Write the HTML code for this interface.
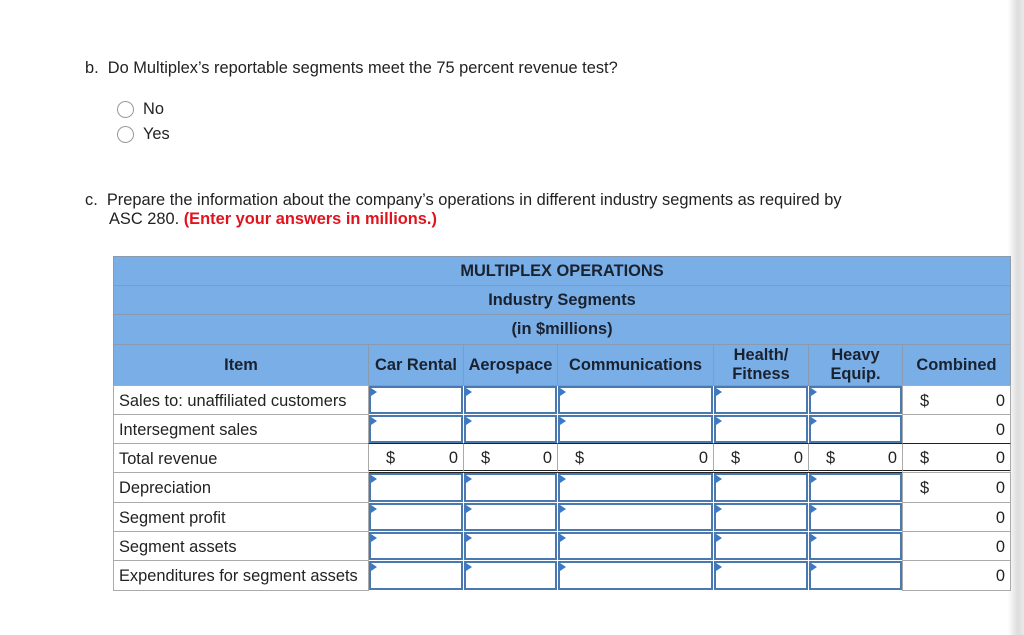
<!DOCTYPE html>
<html><head><meta charset="utf-8"><style>
body{margin:0;width:1024px;height:635px;background:#fff;font-family:"Liberation Sans",Arial,sans-serif;color:#222;position:relative;overflow:hidden}
.a{position:absolute}
.q{font-size:16.4px;color:#222}
.rad{width:15px;height:15px;border:1px solid #999;border-radius:50%;background:#fff}
.c{position:absolute;box-sizing:border-box;font-size:16.4px;display:flex;align-items:center}
.h{background:#7aaee6;font-weight:bold;justify-content:center;text-align:center;border:1px solid #8a9bb0;line-height:19px;color:#1a2230}
.in{border:1px solid #aaa;background:#fff}
.inp{position:absolute;box-sizing:border-box;border:2px solid #4a78b0;background:#fff}
.inp:before{content:"";position:absolute;left:0;top:0;border-left:6px solid #3a78c8;border-top:4px solid transparent;border-bottom:4px solid transparent}
</style></head><body>
<div class="a q" style="left:85px;top:59px">b.&nbsp; Do Multiplex’s reportable segments meet the 75 percent revenue test?</div>
<div class="a rad" style="left:117px;top:101px"></div><div class="a q" style="left:143px;top:100px">No</div>
<div class="a rad" style="left:117px;top:126px"></div><div class="a q" style="left:143px;top:125px">Yes</div>
<div class="a q" style="left:85px;top:191px">c.&nbsp; Prepare the information about the company’s operations in different industry segments as required by</div>
<div class="a q" style="left:109px;top:210px">ASC 280. <b style="color:#e0141e">(Enter your answers in millions.)</b></div>
<div class="a" style="left:1008px;top:0;width:16px;height:635px;background:linear-gradient(90deg,#fff,#ddd 60%,#e8e8e8)"></div>

<div class="c h" style="left:113px;top:256px;width:898px;height:30px">MULTIPLEX OPERATIONS</div>
<div class="c h" style="left:113px;top:285px;width:898px;height:30px">Industry Segments</div>
<div class="c h" style="left:113px;top:314px;width:898px;height:31px">(in $millions)</div>
<div class="c h" style="left:113px;top:344px;width:256px;height:42px">Item</div>
<div class="c h" style="left:368px;top:344px;width:96px;height:42px">Car Rental</div>
<div class="c h" style="left:463px;top:344px;width:95px;height:42px">Aerospace</div>
<div class="c h" style="left:557px;top:344px;width:157px;height:42px">Communications</div>
<div class="c h" style="left:713px;top:344px;width:96px;height:42px">Health/<br>Fitness</div>
<div class="c h" style="left:808px;top:344px;width:95px;height:42px">Heavy<br>Equip.</div>
<div class="c h" style="left:902px;top:344px;width:109px;height:42px">Combined</div>

<div id="rows"></div>
<script>
var labels=["Sales to: unaffiliated customers","Intersegment sales","Total revenue","Depreciation","Segment profit","Segment assets","Expenditures for segment assets"];
var tops=[385,414,443,472,502,531,560,590];
var cols=[[368,463],[463,557],[557,713],[713,808],[808,902]];
var comb=["$","","$","$","","",""];
var h="";
for(var i=0;i<7;i++){var t=tops[i],hh=tops[i+1]-t+1;
h+='<div class="c in" style="left:113px;top:'+t+'px;width:256px;height:'+hh+'px;padding-left:5px;padding-top:2px">'+labels[i]+'</div>';
for(var j=0;j<5;j++){var L=cols[j][0],W=cols[j][1]-L+1;
if(i==2){h+='<div class="c in" style="left:'+L+'px;top:'+t+'px;width:'+W+'px;height:'+hh+'px;justify-content:space-between;padding:2px 5px 0 17px;border-bottom:3px double #222;border-top:1px solid #222">$<span>0</span></div>';}
else h+='<div class="inp" style="left:'+(L+1)+'px;top:'+(t+1)+'px;width:'+(W-2)+'px;height:'+(hh-2)+'px"></div>';}
h+='<div class="c in" style="left:902px;top:'+t+'px;width:109px;height:'+hh+'px;justify-content:space-between;padding:2px 5px 0 17px'+(i==2?';border-bottom:3px double #222;border-top:1px solid #222':'')+'"><span>'+comb[i]+'</span><span>0</span></div>';}
document.getElementById("rows").innerHTML=h;
</script>
</body></html>
